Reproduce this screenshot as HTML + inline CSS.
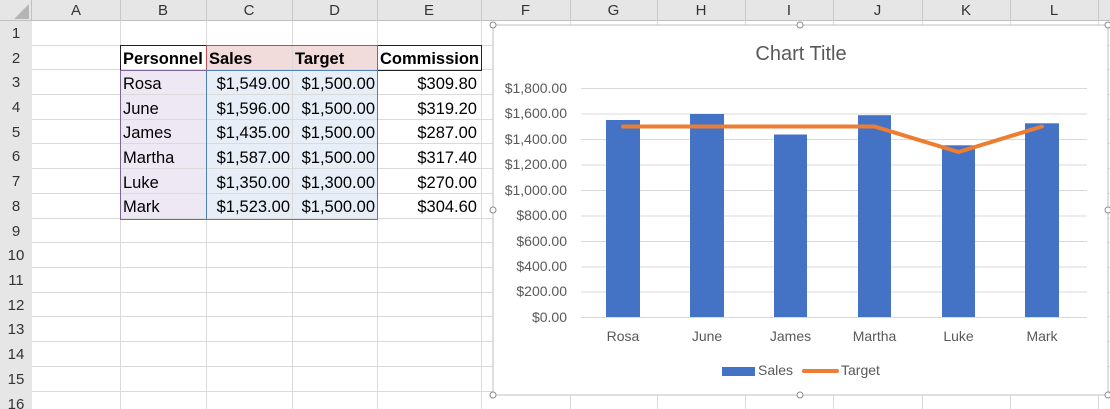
<!DOCTYPE html>
<html style="overflow:hidden;width:1110px;height:409px"><head><style>
html,body{margin:0;padding:0}
body{width:1110px;height:409px;overflow:hidden;background:#fff;font-family:"Liberation Sans",sans-serif;position:relative}
.a{position:absolute;box-sizing:border-box}
.vl{position:absolute;top:21px;width:1px;height:388px;background:#dadada}
.hl{position:absolute;left:32px;height:1px;width:1078px;background:#dadada}
.ch{position:absolute;top:0;height:21px;line-height:21px;text-align:center;font-size:15px;color:#333;border-right:1px solid #c8c8c8}
.rh{position:absolute;left:0;width:32px;text-align:center;font-size:15px;color:#333;border-bottom:1px solid #c8c8c8;background:#e6e6e6}
.t{position:absolute;font-size:16.5px;color:#000;height:25px;line-height:27px;white-space:nowrap}
</style></head><body>
<div class="a" style="left:0;top:0;width:1110px;height:21px;background:#e6e6e6;border-bottom:1px solid #c0c0c0"></div>
<div class="a" style="left:0;top:0;width:32px;height:21px;border-right:1px solid #c0c0c0"></div>
<svg class="a" style="left:14px;top:4px" width="15" height="15"><polygon points="15,0 15,15 0,15" fill="#b5b5b5"/></svg>
<div class="ch" style="left:32px;width:88px">A</div>
<div class="ch" style="left:120px;width:86px">B</div>
<div class="ch" style="left:206px;width:86px">C</div>
<div class="ch" style="left:292px;width:85px">D</div>
<div class="ch" style="left:377px;width:104px">E</div>
<div class="ch" style="left:481px;width:89px">F</div>
<div class="ch" style="left:570px;width:87px">G</div>
<div class="ch" style="left:657px;width:88px">H</div>
<div class="ch" style="left:745px;width:88px">I</div>
<div class="ch" style="left:833px;width:89px">J</div>
<div class="ch" style="left:922px;width:88px">K</div>
<div class="ch" style="left:1010px;width:88px">L</div>
<div class="a" style="left:0;top:21px;width:32px;height:388px;background:#e6e6e6;border-right:1px solid #c0c0c0"></div>

<div class="rh" style="top:21px;height:25px;line-height:25px">1</div>
<div class="rh" style="top:46px;height:24px;line-height:25px">2</div>
<div class="rh" style="top:70px;height:25px;line-height:25px">3</div>
<div class="rh" style="top:95px;height:25px;line-height:25px">4</div>
<div class="rh" style="top:120px;height:24px;line-height:25px">5</div>
<div class="rh" style="top:144px;height:25px;line-height:25px">6</div>
<div class="rh" style="top:169px;height:25px;line-height:25px">7</div>
<div class="rh" style="top:194px;height:25px;line-height:25px">8</div>
<div class="rh" style="top:219px;height:24px;line-height:25px">9</div>
<div class="rh" style="top:243px;height:25px;line-height:25px">10</div>
<div class="rh" style="top:268px;height:25px;line-height:25px">11</div>
<div class="rh" style="top:293px;height:24px;line-height:25px">12</div>
<div class="rh" style="top:317px;height:25px;line-height:25px">13</div>
<div class="rh" style="top:342px;height:25px;line-height:25px">14</div>
<div class="rh" style="top:367px;height:25px;line-height:25px">15</div>
<div class="rh" style="top:392px;height:17px;line-height:25px;border-bottom:none">16</div>

<div class="a" style="left:206px;top:46px;width:171px;height:24px;background:#f2dcdb"></div>
<div class="a" style="left:120px;top:70px;width:86px;height:149px;background:#eee8f5"></div>
<div class="a" style="left:206px;top:70px;width:171px;height:149px;background:#e7eef8"></div>

<div class="vl" style="left:120px"></div><div class="vl" style="left:206px"></div><div class="vl" style="left:292px"></div><div class="vl" style="left:377px"></div><div class="vl" style="left:481px"></div><div class="vl" style="left:570px"></div><div class="vl" style="left:657px"></div><div class="vl" style="left:745px"></div><div class="vl" style="left:833px"></div><div class="vl" style="left:922px"></div><div class="vl" style="left:1010px"></div><div class="vl" style="left:1098px"></div>
<div class="hl" style="top:45px"></div><div class="hl" style="top:69px"></div><div class="hl" style="top:94px"></div><div class="hl" style="top:119px"></div><div class="hl" style="top:143px"></div><div class="hl" style="top:168px"></div><div class="hl" style="top:193px"></div><div class="hl" style="top:218px"></div><div class="hl" style="top:242px"></div><div class="hl" style="top:267px"></div><div class="hl" style="top:292px"></div><div class="hl" style="top:316px"></div><div class="hl" style="top:341px"></div><div class="hl" style="top:366px"></div><div class="hl" style="top:391px"></div>

<div class="a" style="left:120px;top:45px;width:87px;height:26px;border:1.5px solid #222"></div>
<div class="a" style="left:377px;top:45px;width:105px;height:26px;border:1.5px solid #222"></div>
<div class="a" style="left:206px;top:45px;width:172px;height:26px;border:1px solid #c0504d"></div>
<div class="a" style="left:120px;top:70px;width:87px;height:150px;border:1px solid #8064a2"></div>
<div class="a" style="left:206px;top:70px;width:172px;height:150px;border:1px solid #4f81bd"></div>

<div class="t" style="left:123px;top:46px;font-weight:bold">Personnel</div>
<div class="t" style="left:209px;top:46px;font-weight:bold">Sales</div>
<div class="t" style="left:295px;top:46px;font-weight:bold">Target</div>
<div class="t" style="left:380px;top:46px;font-weight:bold">Commission</div>

<div class="t" style="left:123px;top:71px">Rosa</div>
<div class="t" style="left:123px;top:96px">June</div>
<div class="t" style="left:123px;top:120px">James</div>
<div class="t" style="left:123px;top:145px">Martha</div>
<div class="t" style="left:123px;top:170px">Luke</div>
<div class="t" style="left:123px;top:194px">Mark</div>

<div class="t" style="left:206px;width:84px;text-align:right;top:71px">$1,549.00</div>
<div class="t" style="left:206px;width:84px;text-align:right;top:96px">$1,596.00</div>
<div class="t" style="left:206px;width:84px;text-align:right;top:120px">$1,435.00</div>
<div class="t" style="left:206px;width:84px;text-align:right;top:145px">$1,587.00</div>
<div class="t" style="left:206px;width:84px;text-align:right;top:170px">$1,350.00</div>
<div class="t" style="left:206px;width:84px;text-align:right;top:194px">$1,523.00</div>

<div class="t" style="left:292px;width:83px;text-align:right;top:71px">$1,500.00</div>
<div class="t" style="left:292px;width:83px;text-align:right;top:96px">$1,500.00</div>
<div class="t" style="left:292px;width:83px;text-align:right;top:120px">$1,500.00</div>
<div class="t" style="left:292px;width:83px;text-align:right;top:145px">$1,500.00</div>
<div class="t" style="left:292px;width:83px;text-align:right;top:170px">$1,300.00</div>
<div class="t" style="left:292px;width:83px;text-align:right;top:194px">$1,500.00</div>

<div class="t" style="left:377px;width:100px;text-align:right;top:71px">$309.80</div>
<div class="t" style="left:377px;width:100px;text-align:right;top:96px">$319.20</div>
<div class="t" style="left:377px;width:100px;text-align:right;top:120px">$287.00</div>
<div class="t" style="left:377px;width:100px;text-align:right;top:145px">$317.40</div>
<div class="t" style="left:377px;width:100px;text-align:right;top:170px">$270.00</div>
<div class="t" style="left:377px;width:100px;text-align:right;top:194px">$304.60</div>

<svg class="a" style="left:0;top:0" width="1110" height="409" font-family="Liberation Sans, sans-serif">
<rect x="493" y="25" width="615" height="370" fill="#fff" stroke="#bfbfbf" stroke-width="1"/>
<g fill="#fff" stroke="#8a8a8a" stroke-width="1">
<circle cx="493" cy="25" r="3"/><circle cx="800" cy="25" r="3"/><circle cx="1108" cy="25" r="3"/>
<circle cx="493" cy="210" r="3"/><circle cx="1108" cy="210" r="3"/>
<circle cx="493" cy="395" r="3"/><circle cx="800" cy="395" r="3"/><circle cx="1108" cy="395" r="3"/>
</g>
<text x="801" y="60" text-anchor="middle" font-size="20" fill="#595959">Chart Title</text>
<g stroke="#d9d9d9" stroke-width="1">
<line x1="581" y1="88.5" x2="1087" y2="88.5"/><line x1="581" y1="114" x2="1087" y2="114"/><line x1="581" y1="139.5" x2="1087" y2="139.5"/><line x1="581" y1="165" x2="1087" y2="165"/><line x1="581" y1="190.5" x2="1087" y2="190.5"/><line x1="581" y1="216" x2="1087" y2="216"/><line x1="581" y1="241.5" x2="1087" y2="241.5"/><line x1="581" y1="267" x2="1087" y2="267"/><line x1="581" y1="292" x2="1087" y2="292"/><line x1="581" y1="317.5" x2="1087" y2="317.5"/>
</g>
<g font-size="14" fill="#595959" text-anchor="end">
<text x="567" y="93">$1,800.00</text><text x="567" y="118">$1,600.00</text><text x="567" y="144">$1,400.00</text><text x="567" y="169">$1,200.00</text><text x="567" y="195">$1,000.00</text><text x="567" y="220">$800.00</text><text x="567" y="246">$600.00</text><text x="567" y="271">$400.00</text><text x="567" y="296">$200.00</text><text x="567" y="322">$0.00</text>
</g>
<g fill="#4472c4">
<rect x="606" y="120" width="34" height="197"/>
<rect x="690" y="114" width="34" height="203"/>
<rect x="774" y="134.5" width="33" height="182.5"/>
<rect x="858" y="115.2" width="33" height="201.8"/>
<rect x="942" y="145.3" width="33" height="171.7"/>
<rect x="1025" y="123.3" width="34" height="193.7"/>
</g>
<polyline points="623,126.5 707,126.5 790.5,126.5 874.5,126.5 958.5,152 1042,126.5" fill="none" stroke="#ed7d31" stroke-width="4" stroke-linejoin="round" stroke-linecap="round"/>
<g font-size="14" fill="#595959" text-anchor="middle">
<text x="623" y="341">Rosa</text><text x="707" y="341">June</text><text x="790.5" y="341">James</text><text x="874.5" y="341">Martha</text><text x="958.5" y="341">Luke</text><text x="1042" y="341">Mark</text>
</g>
<rect x="722" y="367" width="33" height="9" fill="#4472c4"/>
<text x="758" y="375" font-size="14" fill="#595959">Sales</text>
<line x1="804" y1="371" x2="837" y2="371" stroke="#ed7d31" stroke-width="4" stroke-linecap="round"/>
<text x="841" y="375" font-size="14" fill="#595959">Target</text>
</svg>
</body></html>
